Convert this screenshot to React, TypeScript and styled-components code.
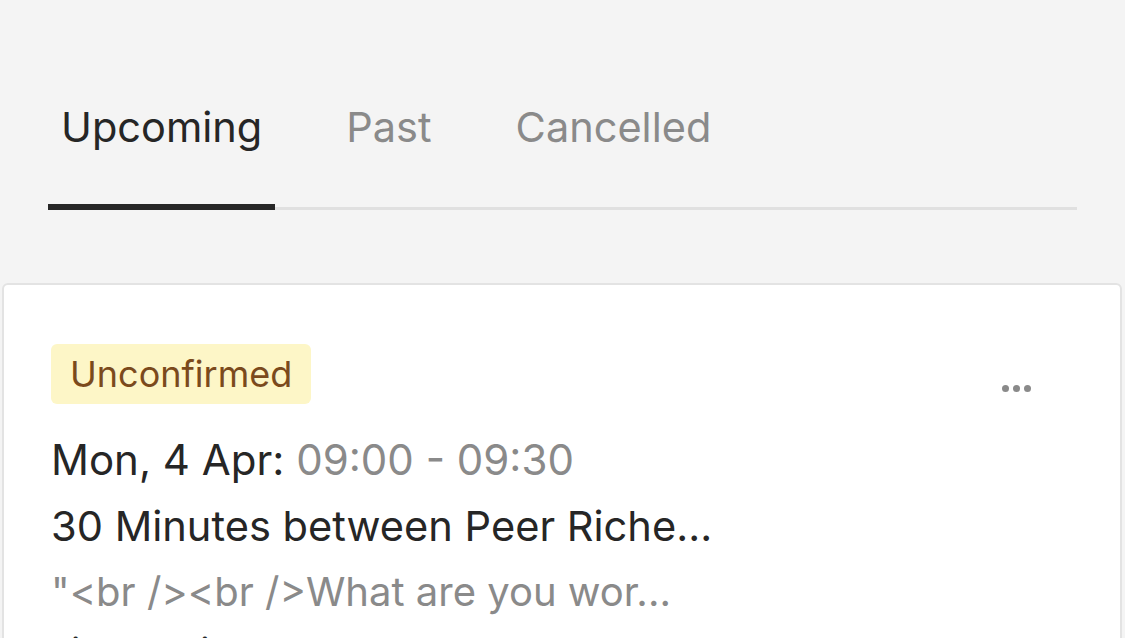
import React from "react";
import styled, { createGlobalStyle } from "styled-components";

const Global = createGlobalStyle`
  html, body { margin: 0; padding: 0; background: #f4f4f4; }
  body { font-family: Inter, "Noto Sans", sans-serif; overflow: hidden; }
`;

const Page = styled.div`
  width: 1125px;
  height: 638px;
  background: #f4f4f4;
  padding-top: 62px;
  box-sizing: border-box;
  overflow: hidden;
`;

const TabBar = styled.div`
  display: flex;
  gap: 58px;
  margin: 0 48px;
  border-bottom: 3px solid #e0e0e0;
`;

const Tab = styled.div<{ $active?: boolean }>`
  position: relative;
  padding: 40px 13px 55px;
  font-size: 41.5px;
  line-height: 50px;
  color: ${(p) => (p.$active ? "#262626" : "#8a8a8a")};
  &::after {
    content: "";
    display: ${(p) => (p.$active ? "block" : "none")};
    position: absolute;
    left: 0;
    right: 0;
    bottom: -3px;
    height: 6px;
    background: #262626;
  }
`;

const Card = styled.div`
  margin: 73px 3px 0 2px;
  background: #fff;
  border: 2px solid #e3e3e3;
  border-radius: 6px;
  padding: 59px 89px 0 47px;
  display: flex;
  justify-content: space-between;
  align-items: flex-start;
`;

const Info = styled.div`
  display: flex;
  flex-direction: column;
`;

const Badge = styled.span`
  align-self: flex-start;
  background: #fdf6c7;
  color: #7b4a1c;
  border-radius: 6px;
  padding: 0 19px;
  height: 60px;
  line-height: 60px;
  font-size: 36px;
  margin-bottom: 23px;
`;

const Line = styled.div<{ $muted?: boolean; $size?: number }>`
  font-size: ${(p) => p.$size ?? 42}px;
  line-height: 66px;
  color: ${(p) => (p.$muted ? "#8a8a8a" : "#262626")};
  white-space: nowrap;
`;

const Meta = styled.div`
  font-size: 36px;
  line-height: 40px;
  margin-top: 6px;
  color: #262626;
  white-space: nowrap;
`;

const Muted = styled.span`
  color: #8a8a8a;
`;

const More = styled.button`
  border: none;
  background: transparent;
  padding: 0;
  margin: 41px 0 0 0;
  display: flex;
  gap: 4px;
  cursor: pointer;
`;

const Dot = styled.span`
  width: 7px;
  height: 7px;
  border-radius: 50%;
  background: #8a8a8a;
`;

export default function App() {
  return (
    <>
      <Global />
      <Page>
        <TabBar>
          <Tab $active>Upcoming</Tab>
          <Tab>Past</Tab>
          <Tab>Cancelled</Tab>
        </TabBar>
        <Card>
          <Info>
            <Badge>Unconfirmed</Badge>
            <Line>
              Mon, 4 Apr: <Muted>09:00 - 09:30</Muted>
            </Line>
            <Line $size={41.6}>30 Minutes between Peer Riche...</Line>
            <Line $muted $size={40}>"&lt;br /&gt;&lt;br /&gt;What are you wor...</Line>
            <Meta>via Cal Video</Meta>
          </Info>
          <More aria-label="More">
            <Dot />
            <Dot />
            <Dot />
          </More>
        </Card>
      </Page>
    </>
  );
}
